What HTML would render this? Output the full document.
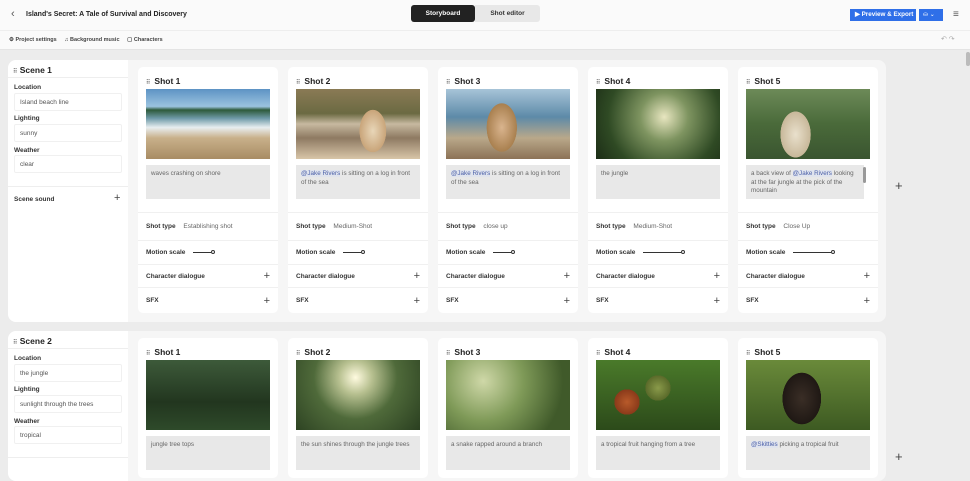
<!DOCTYPE html><html><head><style>
*{box-sizing:border-box;margin:0;padding:0}
body{width:970px;height:470px;overflow:hidden;background:#ececec;font-family:"Liberation Sans",sans-serif;color:#222;position:relative;font-size:7px}
.top{position:absolute;left:0;top:0;width:970px;height:30px;background:#fafafa}
.tb{position:absolute;left:0;top:30px;width:970px;height:20px;background:#fafafa;border-top:1px solid #eee;border-bottom:1px solid #e4e4e4}
.abs{position:absolute}
.scene{position:absolute;left:8px;width:878px;background:#f6f6f6;border-radius:8px;overflow:hidden}
.left{position:absolute;left:0;top:0;width:120px;height:100%;background:#fff}
.lab{position:absolute;left:6px;font-weight:bold;font-size:6.5px;color:#333}
.inp{position:absolute;left:6px;width:108px;height:18px;border:1px solid #f0f0f0;border-radius:2px;font-size:6.5px;color:#555;padding:5px 5px}
.card{position:absolute;width:140px;background:#fff;border-radius:5px}
.st{position:absolute;left:8px;top:9px;font-weight:bold;font-size:8.5px}
.st:before{content:"⠿";font-size:6px;color:#888;margin-right:4px}
.img{position:absolute;left:8px;top:22px;width:124px;height:70px}
.txt{position:absolute;left:8px;top:98px;width:124px;height:34px;background:#e8e8e8;color:#666;font-size:6.3px;padding:5px 5px;line-height:1.35}
.at{color:#4a5fa8;background:#e0e4ee}
.row{position:absolute;left:0;width:140px;border-top:1px solid #f0f0f0;font-size:6.5px;font-weight:bold;color:#333;padding-left:8px}
.plus{position:absolute;right:8px;font-size:11px;font-weight:normal;color:#444}
</style></head><body>
<div class="top"></div>
<div class="abs" style="left:11px;top:8px;font-size:11px;color:#555">‹</div>
<div class="abs" style="left:26px;top:11px;font-size:7px;font-weight:bold">Island's Secret: A Tale of Survival and Discovery</div>
<div class="abs" style="left:411px;top:5px;width:64px;height:17px;background:#222;color:#fff;border-radius:3px;font-weight:bold;font-size:6.5px;text-align:center;line-height:17px">Storyboard</div>
<div class="abs" style="left:475px;top:5px;width:65px;height:17px;background:#e8e8e8;color:#333;border-radius:0 3px 3px 0;font-weight:bold;font-size:6.5px;text-align:center;line-height:17px">Shot editor</div>
<div class="abs" style="left:850px;top:9px;width:66px;height:12px;background:#2f6fe8;color:#fff;font-weight:bold;font-size:6.3px;line-height:12px;padding-left:5px">▶ Preview &amp; Export</div>
<div class="abs" style="left:919px;top:9px;width:24px;height:12px;background:#2f6fe8;color:#fff;font-size:6px;line-height:12px;padding-left:4px">⛀ ⌄</div>
<div class="abs" style="left:953px;top:9px;font-size:10px;color:#555">≡</div>
<div class="tb"></div>
<div class="abs" style="left:9px;top:37px;font-size:5.5px;font-weight:bold;color:#444">⚙ Project settings &nbsp;&nbsp;&nbsp;&nbsp;♫ Background music &nbsp;&nbsp;&nbsp;&nbsp;▢ Characters</div>
<div class="abs" style="left:941px;top:35px;font-size:7px;color:#aaa">↶ ↷</div>
<div class="abs" style="left:966px;top:52px;width:4px;height:14px;background:#bbb;border-radius:2px"></div>

<div class="scene" style="top:60px;height:262px">
 <div class="left">
  <div class="abs" style="left:5px;top:5px;font-weight:bold;font-size:8.5px"><span style="font-size:6px;color:#888">⠿</span> Scene 1</div>
  <div class="abs" style="left:0;top:17px;width:120px;border-top:1px solid #eee"></div>
  <div class="lab" style="top:24px">Location</div><div class="inp" style="top:33px">Island beach line</div>
  <div class="lab" style="top:55px">Lighting</div><div class="inp" style="top:64px">sunny</div>
  <div class="lab" style="top:87px">Weather</div><div class="inp" style="top:95px">clear</div>
  <div class="abs" style="left:0;top:126px;width:120px;border-top:1px solid #eee"></div>
  <div class="lab" style="top:136px">Scene sound</div><div class="abs" style="left:106px;top:132px;font-size:11px;color:#444">+</div>
 </div>
</div>
<div class="scene" style="top:331px;height:150px">
 <div class="left">
  <div class="abs" style="left:5px;top:5px;font-weight:bold;font-size:8.5px"><span style="font-size:6px;color:#888">⠿</span> Scene 2</div>
  <div class="abs" style="left:0;top:17px;width:120px;border-top:1px solid #eee"></div>
  <div class="lab" style="top:24px">Location</div><div class="inp" style="top:33px">the jungle</div>
  <div class="lab" style="top:55px">Lighting</div><div class="inp" style="top:64px">sunlight through the trees</div>
  <div class="lab" style="top:87px">Weather</div><div class="inp" style="top:95px">tropical</div>
  <div class="abs" style="left:0;top:126px;width:120px;border-top:1px solid #eee"></div>
 </div>
</div>
<div class="abs" style="left:895px;top:178px;font-size:13px;color:#444">+</div>
<div class="abs" style="left:895px;top:449px;font-size:13px;color:#444">+</div>

<!-- scene 1 cards -->
<div class="card" style="left:138px;top:67px;height:246px"><div class="st">Shot 1</div>
<div class="img" style="background:linear-gradient(180deg,#5d93c4 0%,#9bc3df 25%,#2d5a3a 30%,#6f9aa8 42%,#e8eef0 55%,#c8b08a 70%,#a88c64 100%)"></div>
<div class="txt">waves crashing on shore</div>
<div class="row" style="top:145px;height:28px;line-height:28px">Shot type <span style="font-weight:normal;color:#666;margin-left:6px">Establishing shot</span></div>
<div class="row" style="top:173px;height:24px;line-height:24px">Motion scale <span style="display:inline-block;width:18px;border-top:1px solid #333;vertical-align:middle;margin-left:6px"></span><span style="display:inline-block;width:4px;height:4px;border:1px solid #333;border-radius:50%;vertical-align:middle"></span></div>
<div class="row" style="top:197px;height:23px;line-height:23px">Character dialogue<span class="plus">+</span></div>
<div class="row" style="top:220px;height:26px;line-height:26px">SFX<span class="plus">+</span></div></div>

<div class="card" style="left:288px;top:67px;height:246px"><div class="st">Shot 2</div>
<div class="img" style="background:radial-gradient(ellipse 22px 35px at 62% 60%,#e8d6b8,#c9a57a 60%,transparent 61%),linear-gradient(180deg,#8a7a55 0%,#6b6a42 35%,#c7b9a0 50%,#8e7a62 70%,#d8c5a8 100%)"></div>
<div class="txt"><span class="at">@Jake Rivers</span> is sitting on a log in front of the sea</div>
<div class="row" style="top:145px;height:28px;line-height:28px">Shot type <span style="font-weight:normal;color:#666;margin-left:6px">Medium-Shot</span></div>
<div class="row" style="top:173px;height:24px;line-height:24px">Motion scale <span style="display:inline-block;width:18px;border-top:1px solid #333;vertical-align:middle;margin-left:6px"></span><span style="display:inline-block;width:4px;height:4px;border:1px solid #333;border-radius:50%;vertical-align:middle"></span></div>
<div class="row" style="top:197px;height:23px;line-height:23px">Character dialogue<span class="plus">+</span></div>
<div class="row" style="top:220px;height:26px;line-height:26px">SFX<span class="plus">+</span></div></div>

<div class="card" style="left:438px;top:67px;height:246px"><div class="st">Shot 3</div>
<div class="img" style="background:radial-gradient(ellipse 25px 40px at 45% 55%,#d9b48e,#a9804f 60%,transparent 61%),linear-gradient(180deg,#a7c4d8 0%,#5d8aa8 40%,#b9a88a 70%,#8c7256 100%)"></div>
<div class="txt"><span class="at">@Jake Rivers</span> is sitting on a log in front of the sea</div>
<div class="row" style="top:145px;height:28px;line-height:28px">Shot type <span style="font-weight:normal;color:#666;margin-left:6px">close up</span></div>
<div class="row" style="top:173px;height:24px;line-height:24px">Motion scale <span style="display:inline-block;width:18px;border-top:1px solid #333;vertical-align:middle;margin-left:6px"></span><span style="display:inline-block;width:4px;height:4px;border:1px solid #333;border-radius:50%;vertical-align:middle"></span></div>
<div class="row" style="top:197px;height:23px;line-height:23px">Character dialogue<span class="plus">+</span></div>
<div class="row" style="top:220px;height:26px;line-height:26px">SFX<span class="plus">+</span></div></div>

<div class="card" style="left:588px;top:67px;height:246px"><div class="st">Shot 4</div>
<div class="img" style="background:radial-gradient(circle at 55% 40%,#e8e6c0,#7e9460 30%,#2f4a24 70%,#1c2d16)"></div>
<div class="txt">the jungle</div>
<div class="row" style="top:145px;height:28px;line-height:28px">Shot type <span style="font-weight:normal;color:#666;margin-left:6px">Medium-Shot</span></div>
<div class="row" style="top:173px;height:24px;line-height:24px">Motion scale <span style="display:inline-block;width:38px;border-top:1px solid #333;vertical-align:middle;margin-left:6px"></span><span style="display:inline-block;width:4px;height:4px;border:1px solid #333;border-radius:50%;vertical-align:middle"></span></div>
<div class="row" style="top:197px;height:23px;line-height:23px">Character dialogue<span class="plus">+</span></div>
<div class="row" style="top:220px;height:26px;line-height:26px">SFX<span class="plus">+</span></div></div>

<div class="card" style="left:738px;top:67px;height:246px"><div class="st">Shot 5</div>
<div class="img" style="background:radial-gradient(ellipse 25px 38px at 40% 65%,#e9e0cc,#c8b89a 60%,transparent 61%),linear-gradient(180deg,#6d8a58 0%,#4a6a3a 50%,#3a5530 100%)"></div>
<div class="txt" style="width:118px">a back view of <span class="at">@Jake Rivers</span> looking at the far jungle at the pick of the mountain</div>
<div class="abs" style="left:125px;top:100px;width:3px;height:16px;background:#999;border-radius:2px"></div>
<div class="row" style="top:145px;height:28px;line-height:28px">Shot type <span style="font-weight:normal;color:#666;margin-left:6px">Close Up</span></div>
<div class="row" style="top:173px;height:24px;line-height:24px">Motion scale <span style="display:inline-block;width:38px;border-top:1px solid #333;vertical-align:middle;margin-left:6px"></span><span style="display:inline-block;width:4px;height:4px;border:1px solid #333;border-radius:50%;vertical-align:middle"></span></div>
<div class="row" style="top:197px;height:23px;line-height:23px">Character dialogue<span class="plus">+</span></div>
<div class="row" style="top:220px;height:26px;line-height:26px">SFX<span class="plus">+</span></div></div>

<!-- scene 2 cards -->
<div class="card" style="left:138px;top:338px;height:140px"><div class="st">Shot 1</div>
<div class="img" style="background:linear-gradient(180deg,#3d5a3a,#22361f 60%,#2e4a2a)"></div>
<div class="txt">jungle tree tops</div></div>
<div class="card" style="left:288px;top:338px;height:140px"><div class="st">Shot 2</div>
<div class="img" style="background:radial-gradient(circle at 48% 25%,#fffbe0,#b7c090 20%,#4f6a3a 50%,#2a3f20)"></div>
<div class="txt">the sun shines through the jungle trees</div></div>
<div class="card" style="left:438px;top:338px;height:140px"><div class="st">Shot 3</div>
<div class="img" style="background:radial-gradient(circle at 30% 30%,#cfd8a8,#7f9a58 40%,#405a2a 80%)"></div>
<div class="txt">a snake rapped around a branch</div></div>
<div class="card" style="left:588px;top:338px;height:140px"><div class="st">Shot 4</div>
<div class="img" style="background:radial-gradient(circle 14px at 25% 60%,#b85a2a,#8a3a1a 90%,transparent 91%),radial-gradient(circle 14px at 50% 40%,#8a9a4a,#5a6a2a 90%,transparent 91%),linear-gradient(180deg,#4a7a2a,#2c4a1a)"></div>
<div class="txt">a tropical fruit hanging from a tree</div></div>
<div class="card" style="left:738px;top:338px;height:140px"><div class="st">Shot 5</div>
<div class="img" style="background:radial-gradient(ellipse 24px 32px at 45% 55%,#3a2e26,#1f1814 80%,transparent 81%),linear-gradient(180deg,#6a8a3a,#3d5a22)"></div>
<div class="txt"><span class="at">@Skitties</span> picking a tropical fruit</div></div>
</body></html>
